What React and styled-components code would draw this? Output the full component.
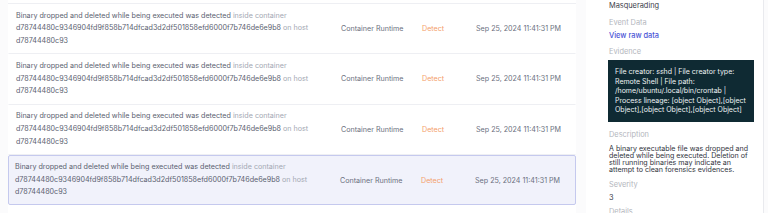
import React from "react"
import styled, { createGlobalStyle } from "styled-components"

const Global = createGlobalStyle`
  html, body {
    margin: 0;
    padding: 0;
    background: #fbfbfc;
    font-family: Inter, "Noto Sans", sans-serif;
    overflow: hidden;
  }
`

const Page = styled.div`
  width: 768px;
  height: 213px;
  display: flex;
  overflow: hidden;
`

const Table = styled.div`
  width: 568px;
  margin-left: 8px;
  display: flex;
  flex-direction: column;
  background: #fff;
`

const TopEdge = styled.div`
  height: 4px;
  flex-shrink: 0;
  border-bottom: 1px solid #eeeff3;
  box-sizing: border-box;
`

const Row = styled.div`
  height: 50.3px;
  box-sizing: border-box;
  flex-shrink: 0;
  display: grid;
  grid-template-columns: 310px 81px 54px 1fr;
  align-items: center;
  padding-left: ${(p) => (p.$selected ? 6 : 7)}px;
  background: ${(p) => (p.$selected ? "#f1f2fb" : "#fff")};
  border: 1px solid ${(p) => (p.$selected ? "#c5c9ee" : "transparent")};
  border-top-width: ${(p) => (p.$selected ? 1 : 0)}px;
  border-bottom-color: ${(p) => (p.$selected ? "#c5c9ee" : "#eeeff3")};
  border-radius: ${(p) => (p.$selected ? "2px" : "0")};
  font-size: 7.15px;
  color: #5b6170;
`

const Desc = styled.div`
  line-height: 12.7px;
  padding-right: 8px;
`

const Muted = styled.span`
  color: #a3a8b3;
`

const Cell = styled.div`
  margin-left: ${(p) => p.$offset || 0}px;
  color: ${(p) => p.$color || "#6b7080"};
  white-space: nowrap;
`

const Panel = styled.div`
  width: 178px;
  margin-left: 10px;
  background: #fff;
  border-right: 1px solid #e9eaee;
  box-sizing: border-box;
  padding: 0 9px 0 23px;
  font-size: 7.4px;
  color: #3c404a;
`

const Value = styled.div`
  line-height: 12px;
  color: #3c404a;
  margin-top: ${(p) => p.$top || 0}px;
`

const Label = styled.div`
  color: #b3b6bd;
  line-height: 12px;
  margin-top: ${(p) => p.$top || 4}px;
`

const Link = styled.div`
  color: #4a55d6;
  font-weight: 500;
  line-height: 12px;
  margin-top: 1px;
`

const Evidence = styled.pre`
  margin: 2px 0 0 -1px;
  background: #0f2a33;
  color: #eef2f3;
  font-family: Inter, "Noto Sans", sans-serif;
  font-size: 7px;
  line-height: 9.6px;
  white-space: pre-wrap;
  padding: 7px 6px 6px 7px;
  height: 62px;
  box-sizing: border-box;
`

const Text = styled.div`
  font-size: 7.1px;
  line-height: 7px;
  color: #2f333b;
  margin-top: 3.5px;
`

const rows = [false, false, false, true]

export default function App() {
  return (
    <Page>
      <Global />
      <Table>
        <TopEdge />
        {rows.map((sel, i) => (
          <Row key={i} $selected={sel}>
            <Desc>
              Binary dropped and deleted while being executed was detected{" "}
              <Muted>inside container</Muted>{" "}
              d78744480c9346904fd9f858b714dfcad3d2df501858efd6000f7b746de6e9b8{" "}
              <Muted>on host</Muted> d78744480c93
            </Desc>
            <Cell $offset={15}>Container Runtime</Cell>
            <Cell $color="#f4a06c" $offset={15}>Detect</Cell>
            <Cell $offset={15}>Sep 25, 2024 11:41:31 PM</Cell>
          </Row>
        ))}
      </Table>
      <Panel>
        <Value>Masquerading</Value>
        <Label $top={5}>Event Data</Label>
        <Link>View raw data</Link>
        <Label>Evidence</Label>
        <Evidence>
          File creator: sshd | File creator type: Remote Shell | File path:
          /home/ubuntu/.local/bin/crontab | Process lineage: [object
          Object],[object Object],[object Object],[object Object]
        </Evidence>
        <Label $top={7}>Description</Label>
        <Text>
          A binary executable file was dropped and deleted while being
          executed. Deletion of still running binaries may indicate an attempt
          to clean forensics evidences.
        </Text>
        <Label $top={6}>Severity</Label>
        <Value $top={1}>3</Value>
        <Label $top={2}>Details</Label>
      </Panel>
    </Page>
  )
}
